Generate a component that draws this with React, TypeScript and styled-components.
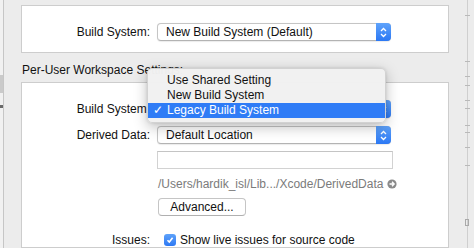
import React from "react";
import styled, { createGlobalStyle } from "styled-components";

const GlobalStyle = createGlobalStyle`
  html, body { margin: 0; padding: 0; }
  body {
    background: #ececec;
    font-family: "Liberation Sans", Helvetica, Arial, sans-serif;
    font-size: 12px;
    color: #111;
  }
`;

const Page = styled.div`
  position: relative;
  display: flex;
  width: 474px;
  height: 248px;
  overflow: hidden;
  background: #ececec;
`;

const LeftStrip = styled.div`
  width: 3px;
  flex: none;
  background: #f1f1f1;
  border-right: 1px solid #c6c6c6;
  display: flex;
  flex-direction: column;
`;

const StripBlock = styled.div<{ $top: number; $h: number; $c: string }>`
  margin-top: ${(p) => p.$top}px;
  height: ${(p) => p.$h}px;
  background: ${(p) => p.$c};
`;

const Main = styled.div`
  width: 428px;
  flex: none;
  padding: 5px 0 0 17px;
  display: flex;
  flex-direction: column;
`;

const RightStrip = styled.div`
  flex: 1;
`;

const Box = styled.div<{ $h?: number }>`
  background: #ffffff;
  border: 1px solid #cdcdcd;
  ${(p) => (p.$h ? `height: ${p.$h}px;` : "flex: 1;")}
  box-sizing: border-box;
  padding-top: 17px;
  display: flex;
  flex-direction: column;
`;

const SectionTitle = styled.div`
  margin: 10px 0 4px 1px;
  line-height: 15px;
  height: 15px;
`;

const Row = styled.div<{ $mt?: number }>`
  display: grid;
  grid-template-columns: 128px auto;
  column-gap: 7px;
  align-items: center;
  margin-top: ${(p) => p.$mt ?? 0}px;
`;

const Label = styled.div`
  text-align: right;
  white-space: nowrap;
`;

const Popup = styled.div`
  position: relative;
  width: 234px;
  height: 18px;
  box-sizing: border-box;
  background: #fff;
  border: 1px solid #c5c5c5;
  border-bottom-color: #b3b3b3;
  border-radius: 4px;
  box-shadow: 0 0.5px 1px rgba(0, 0, 0, 0.08);
  display: flex;
  align-items: center;
  padding-left: 8px;
  line-height: 16px;
  white-space: nowrap;
`;

const Stepper = styled.div`
  position: absolute;
  right: -1px;
  top: -1px;
  bottom: -1px;
  width: 15px;
  border-radius: 0 4px 4px 0;
  background: linear-gradient(#5fa3fb, #2b78f4);
  display: flex;
  align-items: center;
  justify-content: center;
`;

const TextField = styled.div`
  width: 236px;
  height: 18px;
  box-sizing: border-box;
  background: #fff;
  border: 1px solid #d2d2d2;
  border-top-color: #c4c4c4;
`;

const PathText = styled.div`
  color: #7b7b7b;
  display: flex;
  align-items: center;
  gap: 4px;
  padding-left: 1px;
  line-height: 14px;
  white-space: nowrap;
`;

const Button = styled.div`
  width: 88px;
  height: 18px;
  box-sizing: border-box;
  background: #fff;
  border: 1px solid #c5c5c5;
  border-bottom-color: #b0b0b0;
  border-radius: 4px;
  display: flex;
  align-items: center;
  justify-content: center;
  margin-left: 1px;
`;

const CheckRow = styled.div`
  display: flex;
  align-items: center;
  gap: 4px;
  padding-left: 7px;
  white-space: nowrap;
`;

const CheckBox = styled.div`
  width: 12px;
  height: 12px;
  border-radius: 3px;
  background: linear-gradient(#5ea2fa, #2d78f3);
  display: flex;
  align-items: center;
  justify-content: center;
`;

const Menu = styled.div`
  position: absolute;
  left: 147px;
  top: 68px;
  width: 239px;
  box-sizing: border-box;
  padding: 4px 0;
  background: rgba(241, 241, 241, 0.98);
  border: 1px solid rgba(0, 0, 0, 0.13);
  border-radius: 5px;
  box-shadow: 0 4px 14px rgba(0, 0, 0, 0.25), 0 0 3px rgba(0, 0, 0, 0.12);
`;

const MenuItem = styled.div<{ $selected?: boolean }>`
  position: relative;
  height: 15px;
  line-height: 15px;
  padding-left: 19px;
  white-space: nowrap;
  color: ${(p) => (p.$selected ? "#ffffff" : "#111")};
  background: ${(p) => (p.$selected ? "#2f7cf6" : "transparent")};
`;

const Check = styled.span`
  position: absolute;
  left: 5px;
  top: 0;
`;

const StepperIcon = () => (
  <svg width="7" height="11" viewBox="0 0 7 11">
    <path d="M1 4 L3.5 1.5 L6 4" fill="none" stroke="#fff" strokeWidth="1.3" />
    <path d="M1 7 L3.5 9.5 L6 7" fill="none" stroke="#fff" strokeWidth="1.3" />
  </svg>
);

const ArrowCircle = () => (
  <svg width="10" height="10" viewBox="0 0 10 10">
    <circle cx="5" cy="5" r="4.6" fill="#8a8a8a" />
    <path d="M2.5 5 H7 M5 2.8 L7.2 5 L5 7.2" fill="none" stroke="#fff" strokeWidth="1.3" />
  </svg>
);

const Tick = () => (
  <svg width="8" height="8" viewBox="0 0 8 8">
    <path d="M1.5 4.2 L3.3 6 L6.6 1.8" fill="none" stroke="#fff" strokeWidth="1.6" />
  </svg>
);

const Ruler = () => {
  const ticks = [15, 61, 76, 85, 100, 108, 125, 132, 147, 165];
  return (
    <svg width="25" height="248" viewBox="0 0 25 248">
      <line x1="18.5" y1="0" x2="18.5" y2="248" stroke="#cfcfcf" />
      {ticks.map((y) => (
        <line key={y} x1="16" y1={y + 0.5} x2="21" y2={y + 0.5} stroke="#b9b9b9" />
      ))}
      <rect x="16.5" y="219.5" width="3" height="6" fill="none" stroke="#a9a9a9" />
    </svg>
  );
};

export default function App() {
  return (
    <>
      <GlobalStyle />
      <Page>
        <LeftStrip>
          <StripBlock $top={75} $h={18} $c="#cacaca" />
          <StripBlock $top={12} $h={3} $c="#6a6a6a" />
        </LeftStrip>
        <Main>
          <Box $h={49}>
            <Row>
              <Label>Build System:</Label>
              <Popup>
                New Build System (Default)
                <Stepper>
                  <StepperIcon />
                </Stepper>
              </Popup>
            </Row>
          </Box>
          <SectionTitle>Per-User Workspace Settings:</SectionTitle>
          <Box>
            <Row>
              <Label>Build System:</Label>
              <Popup>
                Legacy Build System
                <Stepper>
                  <StepperIcon />
                </Stepper>
              </Popup>
            </Row>
            <Row $mt={8}>
              <Label>Derived Data:</Label>
              <Popup>
                Default Location
                <Stepper>
                  <StepperIcon />
                </Stepper>
              </Popup>
            </Row>
            <Row $mt={7}>
              <span />
              <TextField />
            </Row>
            <Row $mt={8}>
              <span />
              <PathText>
                /Users/hardik_isl/Lib.../Xcode/DerivedData
                <ArrowCircle />
              </PathText>
            </Row>
            <Row $mt={7}>
              <span />
              <Button>Advanced...</Button>
            </Row>
            <Row $mt={17}>
              <Label>Issues:</Label>
              <CheckRow>
                <CheckBox>
                  <Tick />
                </CheckBox>
                Show live issues for source code
              </CheckRow>
            </Row>
          </Box>
        </Main>
        <RightStrip>
          <Ruler />
        </RightStrip>
        <Menu>
          <MenuItem>Use Shared Setting</MenuItem>
          <MenuItem>New Build System</MenuItem>
          <MenuItem $selected>
            <Check>✓</Check>
            Legacy Build System
          </MenuItem>
        </Menu>
      </Page>
    </>
  );
}
